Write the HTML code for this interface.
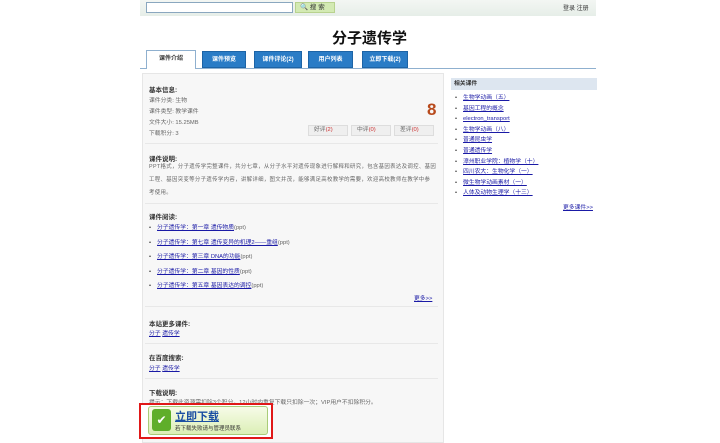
<!DOCTYPE html>
<html><head><meta charset="utf-8"><style>
*{margin:0;padding:0;box-sizing:border-box}
body{width:720px;height:438px;overflow:hidden;background:#fff;font-family:"Liberation Sans","Noto Sans CJK SC",sans-serif;font-size:5.8px;color:#666;position:relative}
.a{position:absolute}
a{color:#1a1aa6;text-decoration:underline}
.top{left:140px;top:0;width:456px;height:16px;background:linear-gradient(#f3f6f3,#e6eee8)}
.tab{top:51px;height:17px;background:#2a7cc6;color:#fff;font-weight:bold;font-size:6px;text-align:center;line-height:17px;border:1px solid #1d64a6}
.h{font-weight:bold;color:#333;font-size:6.5px}
.sep{left:145px;width:293px;height:1px;background:#e8e8e8}
.li{font-size:5.8px}
.li:before{content:"•";color:#333;margin-right:6px}
.btn{top:125px;height:11px;width:40px;background:#efefef;border:1px solid #ddd;line-height:9px;padding-left:5px;color:#666}
.btn span{color:#c33}
</style></head><body>
<div class="a top"></div>
<div class="a" style="left:146px;top:2px;width:147px;height:11px;border:1px solid #8aa7bf;background:#fff"></div>
<div class="a" style="left:295px;top:2px;width:40px;height:11px;background:#d3eab3;border:1px solid #b8d28e;font-size:6.5px;color:#333;line-height:9px;padding-left:4px">🔍 搜 索</div>
<div class="a" style="left:563px;top:3px;font-size:6px;color:#333">登录 注册</div>
<div class="a" style="left:332px;top:27px;font-size:15px;font-weight:bold;color:#111">分子遗传学</div>
<div class="a" style="left:140px;top:68px;width:456px;height:1px;background:#8fb0cf"></div>
<div class="a" style="left:146px;top:50px;width:50px;height:19px;background:#fff;border:1px solid #8fb0cf;border-bottom:none;text-align:center;line-height:17px;font-weight:bold;color:#333;font-size:6px">课件介绍</div>
<div class="a tab" style="left:202px;width:44px">课件预览</div>
<div class="a tab" style="left:254px;width:48px">课件评论(2)</div>
<div class="a tab" style="left:308px;width:45px">用户列表</div>
<div class="a tab" style="left:362px;width:46px">立即下载(2)</div>
<div class="a" style="left:142px;top:73px;width:302px;height:370px;background:#f7f7f7;border:1px solid #e6e6e6"></div>
<div class="a h" style="left:149px;top:84px">基本信息:</div>
<div class="a" style="left:149px;top:95px">课件分类: 生物</div>
<div class="a" style="left:149px;top:106px">课件类型: 教学课件</div>
<div class="a" style="left:149px;top:117px">文件大小: 15.25MB</div>
<div class="a" style="left:149px;top:128px">下载积分: 3</div>
<div class="a" style="left:427px;top:100px;font-size:17px;font-weight:bold;color:#b84a1c">8</div>
<div class="a btn" style="left:308px">好评<span>(2)</span></div>
<div class="a btn" style="left:351px">中评<span>(0)</span></div>
<div class="a btn" style="left:394px">差评<span>(0)</span></div>
<div class="a sep" style="top:143px"></div>
<div class="a h" style="left:149px;top:153px">课件说明:</div>
<div class="a" style="left:149px;top:161px;width:300px;line-height:13px;font-size:5.4px;letter-spacing:0.35px;white-space:nowrap">PPT格式，分子遗传学完整课件，共分七章，从分子水平对遗传现象进行解释和研究，包含基因表达及调控、基因<br>工程、基因突变等分子遗传学内容，讲解详细，图文并茂，能够满足高校教学的需要，欢迎高校教师在教学中参<br>考使用。</div>
<div class="a sep" style="top:203px"></div>
<div class="a h" style="left:149px;top:211px">课件阅读:</div>
<div class="a" style="left:149px;top:221px;line-height:14.5px">
<div class="li"><a>分子遗传学：第一章 遗传物质</a>(ppt)</div>
<div class="li"><a>分子遗传学：第七章 遗传变异的机理2——重组</a>(ppt)</div>
<div class="li"><a>分子遗传学：第三章 DNA的功能</a>(ppt)</div>
<div class="li"><a>分子遗传学：第二章 基因的性质</a>(ppt)</div>
<div class="li"><a>分子遗传学：第五章 基因表达的调控</a>(ppt)</div>
</div>
<div class="a" style="left:414px;top:293px"><a>更多>></a></div>
<div class="a sep" style="top:306px"></div>
<div class="a h" style="left:149px;top:318px">本站更多课件:</div>
<div class="a" style="left:149px;top:328px"><a>分子</a> <a>遗传学</a></div>
<div class="a sep" style="top:343px"></div>
<div class="a h" style="left:149px;top:352px">在百度搜索:</div>
<div class="a" style="left:149px;top:363px"><a>分子</a> <a>遗传学</a></div>
<div class="a sep" style="top:378px"></div>
<div class="a h" style="left:149px;top:387px">下载说明:</div>
<div class="a" style="left:149px;top:397px">提示：下载此资源需扣除3个积分，12小时内重复下载只扣除一次；VIP用户不扣除积分。</div>
<div class="a" style="left:139px;top:403px;width:134px;height:36px;border:2px solid #e01818;background:#fff"></div>
<div class="a" style="left:148px;top:406px;width:120px;height:29px;background:linear-gradient(#f7fbe8,#dcefb6);border:1px solid #a9cc78;border-radius:3px"></div>
<div class="a" style="left:152px;top:409px;width:19px;height:22px;background:#5fae2a;border-radius:3px;color:#fff;font-size:12px;text-align:center;line-height:22px">✔</div>
<div class="a" style="left:175px;top:408px;font-size:11px;font-weight:bold;color:#1b4fa3;text-decoration:underline">立即下载</div>
<div class="a" style="left:175px;top:424px;font-size:5.5px;color:#333">若下载失败请与管理员联系</div>
<div class="a" style="left:451px;top:76px;width:145px;height:240px;background:#fff"></div>
<div class="a" style="left:451px;top:78px;width:146px;height:12px;background:#dde6f0;font-weight:bold;color:#333;padding-left:3px;line-height:12px">相关课件</div>
<div class="a" style="left:455px;top:93px;line-height:10.6px">
<div class="li"><a>生物学动画（五）</a></div>
<div class="li"><a>基因工程的概念</a></div>
<div class="li"><a>electron_transport</a></div>
<div class="li"><a>生物学动画（八）</a></div>
<div class="li"><a>普通昆虫学</a></div>
<div class="li"><a>普通遗传学</a></div>
<div class="li"><a>漳州职业学院：植物学（十）</a></div>
<div class="li"><a>四川农大：生物化学（一）</a></div>
<div class="li"><a>微生物学动画素材（一）</a></div>
<div class="li"><a>人体及动物生理学（十三）</a></div>
</div>
<div class="a" style="left:563px;top:202px"><a>更多课件>></a></div>
</body></html>
